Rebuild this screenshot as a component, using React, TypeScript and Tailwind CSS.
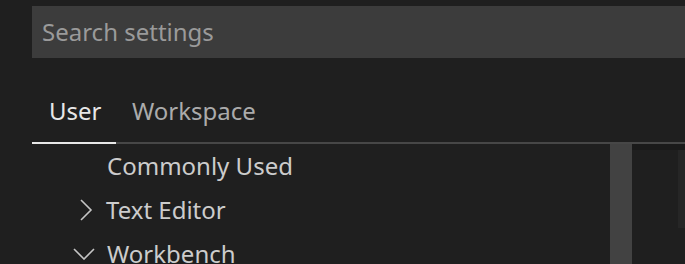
import React from "react";

const font = { fontFamily: '"Noto Sans", "Open Sans", sans-serif' };

const ChevronRight = () => (
  <svg width="14" height="22" viewBox="0 0 14 22" className="shrink-0">
    <path d="M2 1 L12 11 L2 21" fill="none" stroke="#c5c5c5" strokeWidth="1.6" />
  </svg>
);

const ChevronDown = () => (
  <svg width="22" height="12" viewBox="0 0 22 12" className="shrink-0">
    <path d="M1 1 L11 11 L21 1" fill="none" stroke="#c5c5c5" strokeWidth="1.6" />
  </svg>
);

const App: React.FC = () => {
  return (
    <div
      className="w-[685px] h-[264px] overflow-hidden bg-[#1f1f1f] flex flex-col"
      style={font}
    >
      {/* search */}
      <div className="pl-[32px] pt-[6px]">
        <div className="h-[52px] bg-[#3c3c3c] pl-[10px] flex items-center text-[24px] text-[#9a9a9a]">
          Search settings
        </div>
      </div>

      {/* tabs */}
      <div className="pl-[32px] flex">
        <div className="px-[17px] pt-[31px] pb-[9px] leading-[44px] text-[24px] text-[#e7e7e7] border-b-2 border-[#e7e7e7] w-[84px]">
          User
        </div>
        <div className="flex-1 flex border-b-2 border-[#474747]">
          <div className="pl-[16px] pt-[31px] pb-[9px] leading-[44px] text-[24px] text-[#ababab]">
            Workspace
          </div>
        </div>
      </div>

      {/* body */}
      <div className="flex flex-1 min-h-0">
        <div className="w-[610px] pl-[32px] text-[24px] leading-[44px] text-[#cccccc]">
          <div className="pl-[75px] h-[44px]">Commonly Used</div>
          <div className="flex items-center h-[44px] pl-[47px]">
            <ChevronRight />
            <span className="ml-[13px]">Text Editor</span>
          </div>
          <div className="flex items-center h-[44px] pl-[41px]">
            <ChevronDown />
            <span className="ml-[12px]">Workbench</span>
          </div>
        </div>
        <div className="w-[22px] bg-[#424242]" />
        <div className="flex-1 flex flex-col">
          <div className="h-[6px] bg-[#1a1a1a]" />
          <div className="flex">
            <div className="flex-1" />
            <div className="w-[7px] h-[78px] bg-[#262626]" />
          </div>
        </div>
      </div>
    </div>
  );
};

export default App;
